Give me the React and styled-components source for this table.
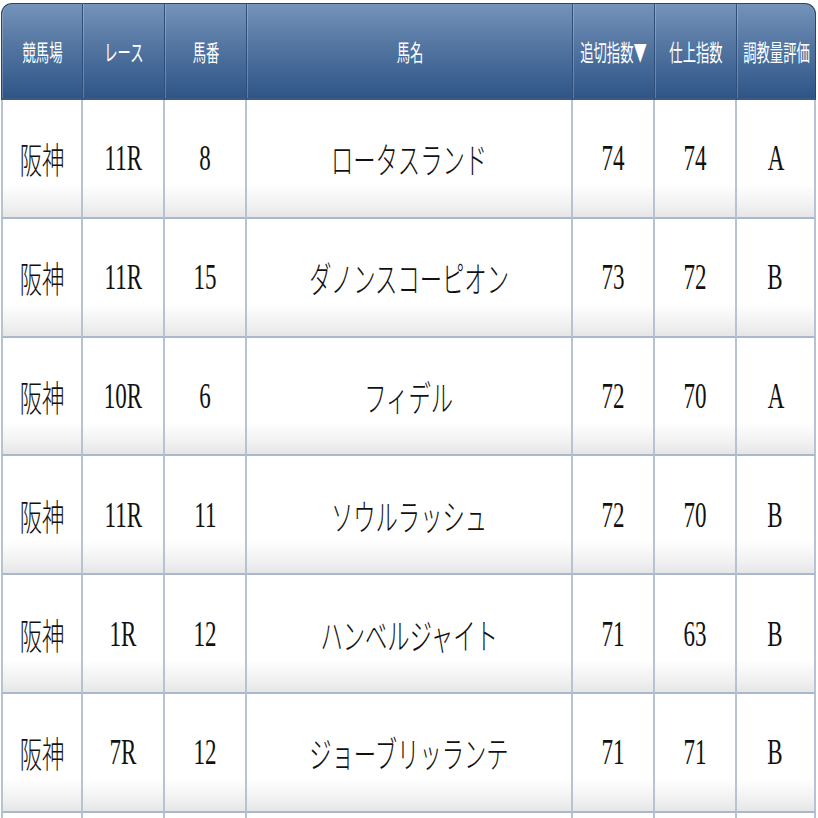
import React from "react";
import styled, { createGlobalStyle } from "styled-components";

const Global = createGlobalStyle`
  html, body { margin: 0; padding: 0; background: #ffffff; }
  body { font-family: "Liberation Serif", "Noto Sans CJK JP", serif; overflow: hidden; }
`;

const Page = styled.div`
  width: 818px;
  height: 818px;
  padding: 3px 2px 0 1px;
  box-sizing: border-box;
  overflow: hidden;
`;

const Grid = styled.div`
  display: grid;
  grid-template-columns: 82px 82px 82px 326px 82px 82px 79px;
  grid-template-rows: 97px;
  grid-auto-rows: 118.8px;
`;

const Head = styled.div`
  display: flex;
  align-items: center;
  justify-content: center;
  min-width: 0;
  overflow: hidden;
  color: #ffffff;
  font-family: "Noto Sans CJK JP", sans-serif;
  font-size: 23px;
  background: linear-gradient(to bottom, #7593ba 0%, #5678a3 40%, #2f5588 100%);
  border-top: 1px solid #2b4468;
  border-bottom: 2px solid #3b5b83;
  border-right: 1px solid #2f4f7a;
  box-shadow: inset 1px 0 0 rgba(255, 255, 255, 0.22);
  box-sizing: border-box;
  white-space: nowrap;
  &:first-child {
    border-top-left-radius: 11px;
    border-left: 1px solid #2b4468;
  }
  &:nth-child(7) {
    border-top-right-radius: 11px;
    border-right: 1px solid #2b4468;
  }
`;

const Cell = styled.div`
  display: flex;
  align-items: center;
  justify-content: center;
  min-width: 0;
  overflow: hidden;
  color: #111111;
  font-size: 36px;
  font-family: ${(p) =>
    p.$jp ? `"Noto Sans CJK JP", sans-serif` : `"Liberation Serif", "Noto Sans CJK JP", serif`};
  font-weight: ${(p) => (p.$jp ? 300 : 400)};
  background: linear-gradient(to bottom, #ffffff 0%, #ffffff 72%, #f1f1f1 90%, #e6e6e6 100%);
  border-right: 2px solid #b7c3d2;
  border-bottom: 2px solid #a9b8cb;
  box-sizing: border-box;
  white-space: nowrap;
  &:nth-child(7n + 1) {
    border-left: 2px solid #b7c3d2;
  }
`;

const Squash = styled.span`
  display: inline-block;
  transform: scaleX(${(p) => p.$k});
  transform-origin: center;
`;

const headers = ["競馬場", "レース", "馬番", "馬名", "追切指数▼", "仕上指数", "調教量評価"];

const rows = [
  ["阪神", "11R", "8", "ロータスランド", "74", "74", "A"],
  ["阪神", "11R", "15", "ダノンスコーピオン", "73", "72", "B"],
  ["阪神", "10R", "6", "フィデル", "72", "70", "A"],
  ["阪神", "11R", "11", "ソウルラッシュ", "72", "70", "B"],
  ["阪神", "1R", "12", "ハンベルジャイト", "71", "63", "B"],
  ["阪神", "7R", "12", "ジョーブリッランテ", "71", "71", "B"],
  ["", "", "", "", "", "", ""],
];

const jpCols = [0, 3];

export default function App() {
  return (
    <Page>
      <Global />
      <Grid>
        {headers.map((h) => (
          <Head key={h}>
            <Squash $k={0.58}>{h}</Squash>
          </Head>
        ))}
        {rows.map((r, i) =>
          r.map((v, j) => (
            <Cell key={`${i}-${j}`} $jp={jpCols.includes(j)}>
              {v && <Squash $k={jpCols.includes(j) ? 0.62 : 0.64}>{v}</Squash>}
            </Cell>
          ))
        )}
      </Grid>
    </Page>
  );
}
